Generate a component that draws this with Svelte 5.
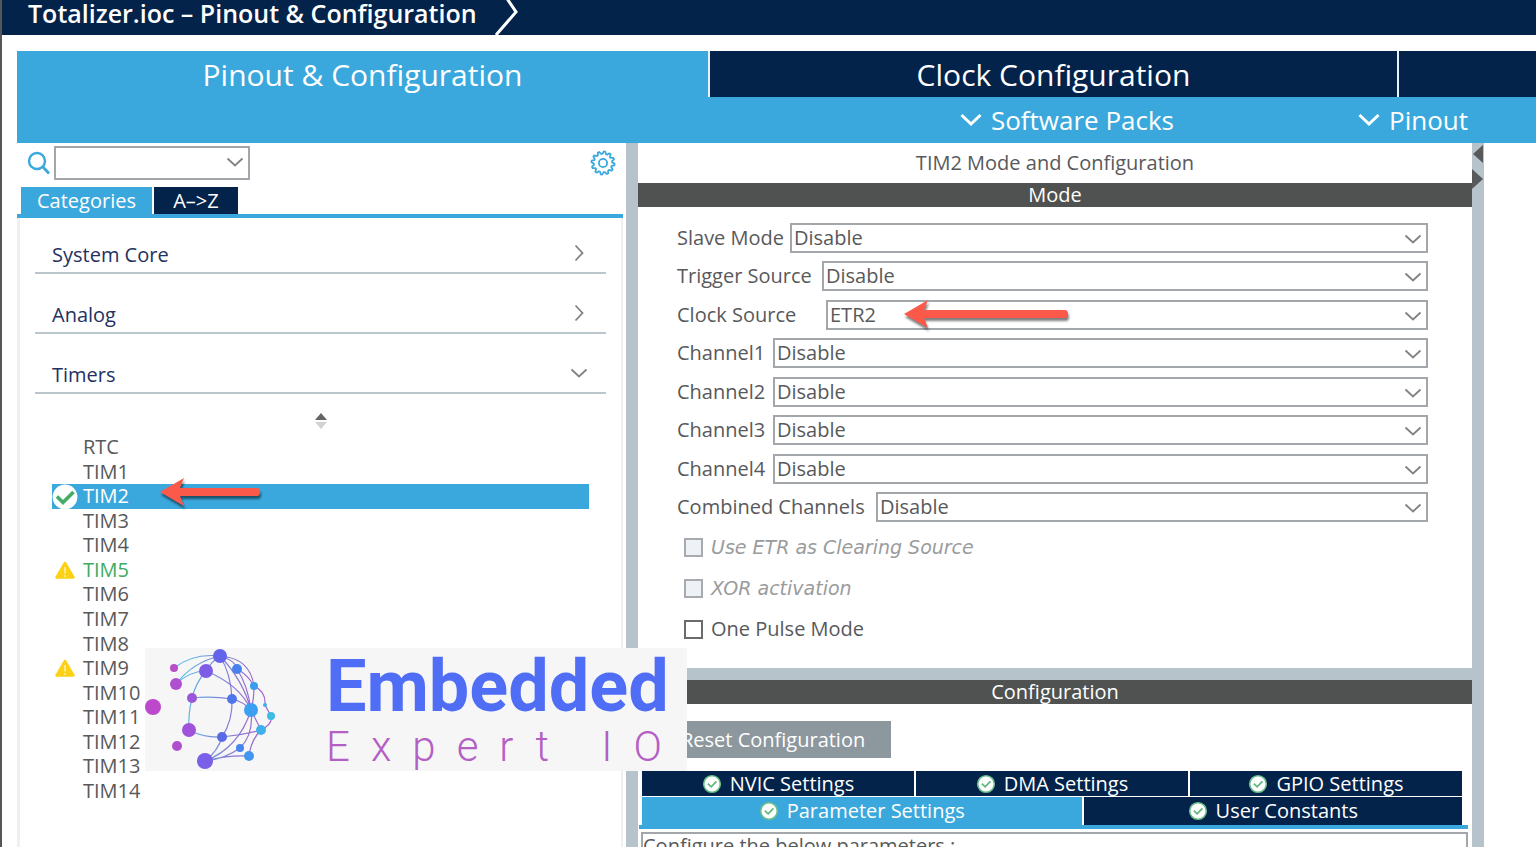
<script lang="ts">
  type Peripheral = { name: string; state?: 'ok' | 'warning'; assigned?: boolean };

  const categories = [
    { name: 'System Core', open: false },
    { name: 'Analog', open: false },
    { name: 'Timers', open: true }
  ];

  const timers: Peripheral[] = [
    { name: 'RTC' },
    { name: 'TIM1' },
    { name: 'TIM2', state: 'ok' },
    { name: 'TIM3' },
    { name: 'TIM4' },
    { name: 'TIM5', state: 'warning', assigned: true },
    { name: 'TIM6' },
    { name: 'TIM7' },
    { name: 'TIM8' },
    { name: 'TIM9', state: 'warning' },
    { name: 'TIM10' },
    { name: 'TIM11' },
    { name: 'TIM12' },
    { name: 'TIM13' },
    { name: 'TIM14' }
  ];

  const modes = [
    { id: 'slave', label: 'Slave Mode', value: 'Disable', width: 108 },
    { id: 'trigger', label: 'Trigger Source', value: 'Disable', width: 140 },
    { id: 'clock', label: 'Clock Source', value: 'ETR2', width: 144 },
    { id: 'ch1', label: 'Channel1', value: 'Disable', width: 91 },
    { id: 'ch2', label: 'Channel2', value: 'Disable', width: 91 },
    { id: 'ch3', label: 'Channel3', value: 'Disable', width: 91 },
    { id: 'ch4', label: 'Channel4', value: 'Disable', width: 91 },
    { id: 'combined', label: 'Combined Channels', value: 'Disable', width: 194 }
  ];

  const flags = [
    { label: 'Use ETR as Clearing Source', disabled: true },
    { label: 'XOR activation', disabled: true },
    { label: 'One Pulse Mode', disabled: false }
  ];

  const upperTabs = ['NVIC Settings', 'DMA Settings', 'GPIO Settings'];
  const lowerTabs = ['Parameter Settings', 'User Constants'];

  // x, y, radius, fill
  const nodes: [number, number, number, string][] = [
    [29, 20, 4, '#b84fc8'],
    [31, 36, 6, '#b04fd0'],
    [75, 8, 7, '#6364ea'],
    [61, 23, 7, '#7d5ce6'],
    [92, 21, 5, '#4681ee'],
    [109, 38, 4, '#3a9cec'],
    [120, 57, 2, '#3fb0e4'],
    [126, 68, 4, '#3dbce4'],
    [106, 62, 7, '#3b9ff2'],
    [116, 82, 5, '#3fb0ea'],
    [104, 108, 5, '#4196f0'],
    [95, 100, 4, '#4784ee'],
    [60, 113, 8, '#7a5fe8'],
    [77, 89, 5, '#5a6ae6'],
    [87, 51, 5, '#4f76ea'],
    [47, 50, 5, '#9b55d8'],
    [44, 82, 7, '#a052d8'],
    [32, 98, 5, '#b04fcc'],
    [8, 59, 8, '#bc48cc']
  ];

  // outline of the settings cog, four points per tooth
  const teeth = 12;
  const cog = Array.from({ length: teeth * 4 }, (_, i) => {
    const radius = i % 4 < 2 ? 11.6 : 9.2;
    const angle = ((i + 0.5) / (teeth * 4)) * Math.PI * 2;
    return `${(radius * Math.cos(angle)).toFixed(2)},${(radius * Math.sin(angle)).toFixed(2)}`;
  }).join(' ');

  let selected = $state('TIM2');
</script>

{#snippet chevron()}
  <svg class="chevron" viewBox="0 0 18 10" width="18" height="10" aria-hidden="true">
    <path d="M1.5 1.5 9 8.5 16.5 1.5" fill="none" stroke="currentColor" stroke-width="1.8" />
  </svg>
{/snippet}

{#snippet tick()}
  <svg viewBox="0 0 20 20" width="20" height="20" aria-hidden="true">
    <circle cx="10" cy="10" r="8.3" fill="#fff" stroke="#6cc08a" stroke-width="1.6" />
    <path d="M5.8 9.6 9.2 12.8 14.4 7.4" fill="none" stroke="#62b97f" stroke-width="1.8" />
  </svg>
{/snippet}

{#snippet arrow(length: number)}
  <svg class="arrow" viewBox="0 0 {length} 34" width={length} height="34" aria-hidden="true">
    <path
      d="M1 15 25 1 21 11H{length - 6}q3 0 3 4t-3 4H21l4 10z"
      fill="#fb5a4a"
    />
  </svg>
{/snippet}

<div class="window">
  <header class="breadcrumb">
    <h1>Totalizer.ioc – Pinout &amp; Configuration</h1>
    <svg viewBox="0 0 26 35" width="26" height="35" aria-hidden="true">
      <path d="M13-3 23 12 3 35" fill="none" stroke="#fff" stroke-width="3" />
    </svg>
  </header>

  <div class="workspace">
    <nav class="main-tabs">
      <button class="main-tab active">Pinout &amp; Configuration</button>
      <button class="main-tab">Clock Configuration</button>
      <button class="main-tab" aria-label="Project Manager"></button>
    </nav>

    <div class="toolbar">
      {#each ['Software Packs', 'Pinout'] as item}
        <button class="menu">
          <svg viewBox="0 0 22 14" width="22" height="14" aria-hidden="true">
            <path d="M1.5 2 11 11 20.5 2" fill="none" stroke="#fff" stroke-width="3" />
          </svg>
          {item}
        </button>
      {/each}
    </div>

    <div class="panes">
      <aside class="sidebar">
        <div class="search">
          <svg viewBox="0 0 24 24" width="24" height="24" aria-hidden="true">
            <circle cx="11" cy="10" r="8" fill="none" stroke="#3aa8dc" stroke-width="2.4" />
            <path d="m16.5 15.5 6.500 7" stroke="#3aa8dc" stroke-width="2.8" />
          </svg>
          <div class="combo">
            <input type="text" aria-label="Search" />
            {@render chevron()}
          </div>
          <button class="gear" aria-label="Settings">
            <svg viewBox="-13 -13 26 26" width="26" height="26">
              <g fill="none" stroke="#3aa8dc" stroke-width="1.8" stroke-linejoin="round">
                <polygon points={cog} />
                <circle r="4.1" />
              </g>
            </svg>
          </button>
        </div>

        <div class="side-tabs">
          <button class="side-tab active">Categories</button>
          <button class="side-tab">A–&gt;Z</button>
        </div>

        <div class="tree">
          {#each categories as category}
            <button class="category" aria-expanded={category.open}>
              {category.name}
              <span class="fold" class:open={category.open}>{@render chevron()}</span>
            </button>
          {/each}

          <svg class="sorter" viewBox="0 0 14 18" width="14" height="18" aria-hidden="true">
            <path d="M7 1 13 8H1z" fill="#646464" />
            <path d="M7 17 13 10H1z" fill="#d2d2d2" />
          </svg>

          <ul class="timers">
            {#each timers as timer}
              <li class:selected={selected === timer.name}>
                <button class:assigned={timer.assigned} onclick={() => (selected = timer.name)}>
                  <span class="state">
                    {#if timer.state === 'ok'}
                      <svg viewBox="0 0 26 26" width="26" height="26" aria-hidden="true">
                        <circle cx="13" cy="13" r="12.4" fill="#fff" />
                        <path d="m5 12.5 6 6L21.5 8" fill="none" stroke="#41ad66" stroke-width="3.6" />
                      </svg>
                    {:else if timer.state === 'warning'}
                      <svg viewBox="0 0 22 20" width="22" height="20" aria-hidden="true">
                        <path
                          d="M11 3 19.5 17.5h-17z"
                          fill="#fcd116"
                          stroke="#fcd116"
                          stroke-width="2.5"
                          stroke-linejoin="round"
                        />
                        <path d="M11 7v6.5M11 15v2" stroke="#fff3b5" stroke-width="1.5" />
                      </svg>
                    {/if}
                  </span>
                  {timer.name}
                </button>
                {#if timer.name === 'TIM2'}
                  <span class="pointer">{@render arrow(104)}</span>
                {/if}
              </li>
            {/each}
          </ul>
        </div>
      </aside>

      <div class="splitter"></div>

      <main class="details">
        <h2 class="title">TIM2 Mode and Configuration</h2>
        <h3 class="band">Mode</h3>

        <section class="mode">
          <div class="fields">
            {#each modes as mode}
              <div class="field">
                <label for={mode.id} style:min-width="{mode.width}px">{mode.label}</label>
                <div class="drop">
                  <select id={mode.id}>
                    <option>{mode.value}</option>
                  </select>
                  {@render chevron()}
                  {#if mode.id === 'clock'}
                    <span class="pointer">{@render arrow(168)}</span>
                  {/if}
                </div>
              </div>
            {/each}
          </div>

          <div class="flags">
            {#each flags as flag}
              <label class:disabled={flag.disabled}>
                <input type="checkbox" disabled={flag.disabled} />
                {flag.label}
              </label>
            {/each}
          </div>
        </section>

        <div class="divider"></div>
        <h3 class="band">Configuration</h3>

        <section class="config">
          <button class="reset">Reset Configuration</button>

          <div class="config-tabs upper">
            {#each upperTabs as tab}
              <button class="config-tab">{@render tick()}{tab}</button>
            {/each}
          </div>
          <div class="config-tabs lower">
            {#each lowerTabs as tab, i}
              <button class="config-tab" class:active={i === 0}>{@render tick()}{tab}</button>
            {/each}
          </div>
          <div class="parameters">Configure the below parameters :</div>
        </section>
      </main>

      <div class="splitter">
        <svg viewBox="0 0 12 46" width="12" height="46" aria-hidden="true">
          <path d="M11 2v18L1 11z" fill="#58595b" />
          <path d="M0 26v20l11-10z" fill="#58595b" />
        </svg>
      </div>
    </div>
  </div>

  <div class="watermark">
    <svg viewBox="0 0 135 123" width="135" height="123" aria-hidden="true">
      <defs>
        <linearGradient id="wire" x1="0" x2="135" y1="0" y2="0" gradientUnits="userSpaceOnUse">
          <stop offset="0.2" stop-color="#58d0ea" />
          <stop offset="0.55" stop-color="#7b86d8" />
          <stop offset="0.85" stop-color="#a465c8" />
        </linearGradient>
      </defs>
      <g fill="none" stroke="url(#wire)" stroke-width="1.2">
        <path d="M29 20Q48 5 75 8M31 36Q48 14 75 8M31 36Q45 23 61 23Q66 14 75 8" />
        <path d="M61 23Q51 34 47 50Q43 66 44 82M47 50Q67 48 87 51Q88 72 77 89Q59 90 44 82" />
        <path d="M75 8Q86 26 87 51M75 8Q91 13 92 21Q103 27 109 38M75 8Q105 10 109 38" />
        <path d="M61 23Q95 37 106 62M75 8Q98 32 106 62M92 21Q103 38 106 62M109 38Q109 52 106 62" />
        <path d="M109 38Q121 43 120 57L126 68Q128 76 116 82M87 51Q99 54 106 62L116 82" />
        <path d="M77 89Q98 87 116 82Q106 92 104 108M106 62Q109 86 95 100" />
        <path d="M106 62Q94 100 60 113M77 89Q73 103 60 113M95 100Q80 111 60 113M104 108Q82 107 60 113" />
      </g>
      {#each nodes as [x, y, r, fill]}
        <circle cx={x} cy={y} {r} {fill} />
      {/each}
    </svg>
    <div class="brand">
      <span class="brand-name">Embedded</span>
      <span class="brand-sub">Expert IO</span>
    </div>
  </div>
</div>

<style>
  :global(body) {
    background: #fff;
  }

  .window {
    position: relative;
    display: flex;
    flex-direction: column;
    height: 100vh;
    overflow: hidden;
    box-sizing: border-box;
    border-left: 2px solid #55565a;
    font-family: 'Open Sans', 'Noto Sans', sans-serif;
    font-size: 20px;
    font-weight: 500;
    line-height: 24px;
    color: #58595b;
  }

  button,
  input,
  select {
    font: inherit;
    color: inherit;
    margin: 0;
    padding: 0;
    border: none;
    border-radius: 0;
    background: none;
  }

  h1,
  h2,
  h3 {
    margin: 0;
    font-size: inherit;
    font-weight: inherit;
  }

  svg {
    display: block;
    flex: none;
  }

  .breadcrumb {
    display: flex;
    flex: none;
    gap: 16px;
    height: 35px;
    padding-left: 26px;
    background: #03234b;
    color: #fff;
  }

  .breadcrumb h1 {
    font-size: 25px;
    font-weight: 600;
    line-height: 26px;
    white-space: nowrap;
  }

  .workspace {
    display: flex;
    flex: 1;
    flex-direction: column;
    margin: 16px 0 0 15px;
  }

  .main-tabs {
    display: grid;
    grid-template-columns: 691fr 687fr 137fr;
    gap: 2px;
    background: #e6f1f8;
  }

  .main-tab {
    height: 46px;
    padding-top: 2px;
    background: #03234b;
    color: #fff;
    font-size: 30px;
  }

  .main-tab.active {
    background: #3aa8dc;
  }

  .toolbar {
    display: flex;
    justify-content: flex-end;
    gap: 184px;
    height: 46px;
    padding-right: 68px;
    background: #3aa8dc;
  }

  .menu {
    display: flex;
    align-items: center;
    gap: 9px;
    color: #fff;
    font-size: 26px;
  }

  .panes {
    display: grid;
    flex: 1;
    grid-template-columns: 609fr 12px 834fr 12px 52fr;
  }

  .splitter {
    background: #b7c3cb;
  }

  .sidebar {
    display: flex;
    flex-direction: column;
    padding-right: 3px;
  }

  .search {
    display: flex;
    align-items: center;
    gap: 4px;
    height: 40px;
    padding: 0 7px 0 9px;
  }

  .combo,
  .drop {
    position: relative;
    border: 2px solid #a3a7ac;
    box-sizing: border-box;
  }

  .combo {
    width: 196px;
    height: 34px;
  }

  .combo input {
    display: block;
    width: 100%;
    height: 100%;
    box-sizing: border-box;
    padding: 0 28px 0 4px;
    outline: none;
  }

  .chevron {
    color: #808285;
  }

  .combo .chevron,
  .drop .chevron {
    position: absolute;
    top: 9px;
    right: 4px;
    pointer-events: none;
  }

  .gear {
    margin-left: auto;
  }

  .side-tabs {
    display: flex;
    gap: 2px;
    padding: 4px 0 0 4px;
    border-bottom: 4px solid #3aa8dc;
  }

  .side-tab {
    min-width: 84px;
    height: 27px;
    padding: 0 16px;
    background: #03234b;
    color: #fff;
  }

  .side-tab.active {
    background: #3aa8dc;
  }

  .tree {
    flex: 1;
    padding: 0 15px;
    border: solid #f0f0f0;
    border-width: 0 2px 0 3px;
  }

  .category {
    display: flex;
    align-items: flex-end;
    justify-content: space-between;
    width: 100%;
    height: 60px;
    box-sizing: border-box;
    padding: 0 18px 5px 17px;
    border-bottom: 2px solid #bcc6cd;
    color: #24315f;
  }

  .category:first-child {
    height: 56px;
  }

  .fold {
    display: grid;
    place-items: center;
    height: 28px;
    transform: rotate(-90deg);
  }

  .fold.open {
    transform: none;
  }

  .sorter {
    margin: 18px auto 5px;
  }

  .timers {
    display: grid;
    grid-auto-rows: 1fr;
    min-height: 368px;
    margin: 0 17px;
    padding: 0;
    list-style: none;
  }

  .timers li {
    position: relative;
  }

  .timers button {
    display: flex;
    align-items: center;
    gap: 5px;
    width: 100%;
    height: 100%;
  }

  .timers .assigned {
    color: #3dab62;
  }

  .timers .selected {
    background: #3aa8dc;
    color: #fff;
  }

  .state {
    display: grid;
    place-items: center;
    width: 26px;
    height: 24px;
  }

  .pointer {
    position: absolute;
    pointer-events: none;
  }

  .timers .pointer {
    left: 107px;
    top: -7px;
  }

  .drop .pointer {
    left: 75px;
    top: -3px;
  }

  .arrow {
    filter: drop-shadow(1px 3px 1px rgba(0, 0, 0, 0.5));
  }

  .title {
    line-height: 40px;
    text-align: center;
  }

  .band {
    background: #4f5250;
    color: #fff;
    text-align: center;
  }

  .mode {
    padding: 16px 44px 27px 39px;
  }

  .fields {
    display: flex;
    flex-direction: column;
    justify-content: space-between;
    min-height: 299px;
  }

  .field {
    display: flex;
    align-items: center;
    gap: 5px;
  }

  .field label {
    white-space: nowrap;
  }

  .drop {
    flex: 1;
    height: 30px;
  }

  .drop select {
    display: block;
    width: 100%;
    height: 26px;
    padding-left: 2px;
    appearance: none;
    outline: none;
  }

  .flags {
    display: flex;
    flex-direction: column;
    align-items: flex-start;
    gap: 17px;
    padding: 13px 0 0 7px;
  }

  .flags label {
    display: flex;
    align-items: center;
    gap: 8px;
  }

  .flags input {
    appearance: none;
    width: 19px;
    height: 19px;
    border: 2px solid #6a6b6d;
  }

  .flags .disabled {
    color: #9a9b9d;
    font-family: 'DejaVu Sans', sans-serif;
    font-size: 19px;
    font-style: italic;
  }

  .flags .disabled input {
    border-color: #a7abb0;
    background: #eef1f6;
  }

  .divider {
    height: 12px;
    background: #b7c3cb;
  }

  .config {
    padding: 17px 4px 0 1px;
  }

  .reset {
    height: 37px;
    margin-left: 16px;
    padding: 0 26px;
    background: #8d979e;
    color: #fff;
  }

  .config-tabs {
    display: grid;
    gap: 2px;
    margin: 0 6px 0 3px;
  }

  .upper {
    grid-template-columns: repeat(3, 1fr);
    margin-top: 13px;
  }

  .lower {
    grid-template-columns: 439fr 378fr;
    margin-top: 1px;
  }

  .config-tab {
    display: flex;
    align-items: center;
    justify-content: center;
    gap: 8px;
    height: 25px;
    background: #03234b;
    color: #fff;
  }

  .lower .config-tab {
    height: 28px;
  }

  .config-tab.active {
    background: #3aa8dc;
  }

  .parameters {
    height: 60px;
    border-top: 4px solid #3aa8dc;
    position: relative;
    padding: 5px 0 0 4px;
  }

  .parameters::before {
    content: '';
    position: absolute;
    inset: 3px 0 0 2px;
    border: 2px solid #a3a7ac;
  }

  .watermark {
    position: absolute;
    left: 143px;
    top: 648px;
    display: flex;
    gap: 46px;
    width: 542px;
    height: 123px;
    background: #f6f6f7;
  }

  .brand {
    display: flex;
    flex-direction: column;
    padding-top: 2px;
    white-space: nowrap;
  }

  .brand-name {
    font-family: Roboto, sans-serif;
    font-size: 72px;
    font-weight: 700;
    line-height: 74px;
    color: #4f6df5;
  }

  .brand-sub {
    font-family: Roboto, sans-serif;
    font-size: 42px;
    font-weight: 300;
    line-height: 46px;
    letter-spacing: 21px;
    color: #b35fc4;
  }
</style>
